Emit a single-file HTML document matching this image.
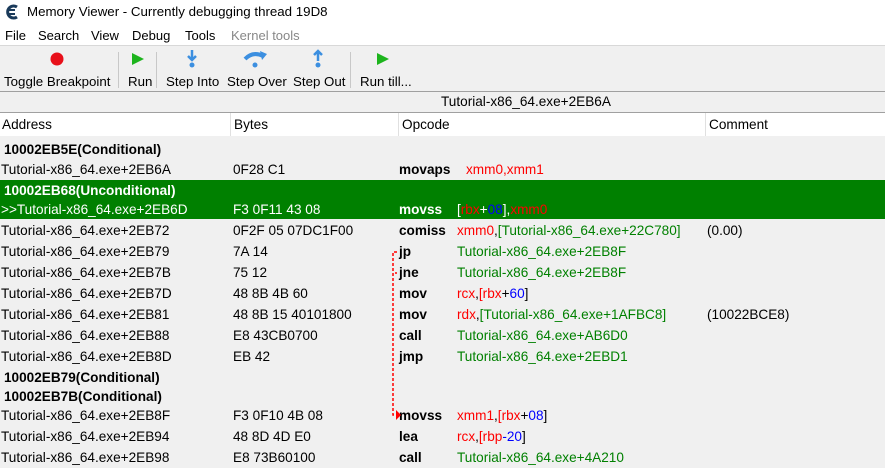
<!DOCTYPE html>
<html><head><meta charset="utf-8"><style>
*{margin:0;padding:0;box-sizing:border-box}
body{width:885px;height:462px;overflow:hidden;background:#f0f0f0;font-family:"Liberation Sans","Noto Sans CJK SC",sans-serif;font-size:13px;color:#000;position:relative}
.a{position:absolute;white-space:nowrap}
.title{top:0;left:0;width:885px;height:24px;background:#fff}
.menu{top:24px;left:0;width:885px;height:22px;background:#fff;border-bottom:1px solid #d8d8d8}
.row{position:absolute;left:0;width:885px;height:21px;line-height:21px;font-size:13.6px}
.b{font-weight:bold}
.r{color:#f00}.g{color:#008000}.bl{color:#00f}
.sep{position:absolute;top:52px;width:1px;height:36px;background:#c8c8c8}
</style></head><body>
<div class="a title"></div>
<svg class="a" style="left:4px;top:4px" width="16" height="16" viewBox="0 0 16 16"><path d="M13 3A6 6 0 1 0 13 13" fill="none" stroke="#1a3a5a" stroke-width="3"/><path d="M4 6h7M4 10h7" stroke="#1a3a5a" stroke-width="2"/></svg>
<div class="a" style="left:27px;top:4px;font-size:13.3px">Memory Viewer - Currently debugging thread 19D8</div>
<div class="a menu"></div>
<div class="a" style="left:5px;top:28px;font-size:13px">File</div>
<div class="a" style="left:38px;top:28px">Search</div>
<div class="a" style="left:91px;top:28px">View</div>
<div class="a" style="left:132px;top:28px">Debug</div>
<div class="a" style="left:185px;top:28px">Tools</div>
<div class="a" style="left:231px;top:28px;color:#888">Kernel tools</div>
<!-- toolbar -->
<svg class="a" style="left:50px;top:52px" width="14" height="14"><circle cx="7" cy="7" r="6.5" fill="#e8101a"/></svg>
<div class="a" style="left:4px;top:74px;font-size:13.3px">Toggle Breakpoint</div>
<div class="sep" style="left:118px"></div>
<svg class="a" style="left:131px;top:52px" width="14" height="14"><path d="M1 1L13 7L1 13Z" fill="#1db41d"/></svg>
<div class="a" style="left:128px;top:74px;font-size:13.3px">Run</div>
<div class="sep" style="left:156px"></div>
<svg class="a" style="left:185px;top:49px" width="14" height="20"><path d="M7 1V10M3 7L7 11L11 7" fill="none" stroke="#3c8fe0" stroke-width="2.5"/><circle cx="7" cy="16" r="2.5" fill="#3c8fe0"/></svg>
<div class="a" style="left:166px;top:74px;font-size:13.3px">Step Into</div>
<svg class="a" style="left:242px;top:49px" width="28" height="20"><path d="M3 10Q11 2 21 7" fill="none" stroke="#3c8fe0" stroke-width="4"/><path d="M18 2L25 5L20 11Z" fill="#3c8fe0"/><circle cx="13" cy="16" r="2.5" fill="#3c8fe0"/></svg>
<div class="a" style="left:227px;top:74px;font-size:13.3px">Step Over</div>
<svg class="a" style="left:311px;top:49px" width="14" height="20"><path d="M7 3V12M3 6L7 2L11 6" fill="none" stroke="#3c8fe0" stroke-width="2.5"/><circle cx="7" cy="16" r="2.5" fill="#3c8fe0"/></svg>
<div class="a" style="left:293px;top:74px;font-size:13.3px">Step Out</div>
<div class="sep" style="left:350px"></div>
<svg class="a" style="left:376px;top:52px" width="14" height="14"><path d="M1 1L13 7L1 13Z" fill="#1db41d"/></svg>
<div class="a" style="left:360px;top:74px;font-size:13.3px">Run till...</div>
<!-- address bar -->
<div class="a" style="left:0;top:91px;width:885px;height:22px;border-top:1px solid #a0a0a0;border-bottom:1px solid #a0a0a0;background:#f0f0f0"></div>
<div class="a" style="left:441px;top:94px;font-size:13.6px">Tutorial-x86_64.exe+2EB6A</div>
<!-- header -->
<div class="a" style="left:0;top:113px;width:885px;height:23px;background:#fff"></div>
<div class="a" style="left:230px;top:113px;width:1px;height:23px;background:#e0e0e0"></div>
<div class="a" style="left:398px;top:113px;width:1px;height:23px;background:#e0e0e0"></div>
<div class="a" style="left:705px;top:113px;width:1px;height:23px;background:#e0e0e0"></div>
<div class="a" style="left:2px;top:117px;font-size:13.6px">Address</div>
<div class="a" style="left:234px;top:117px;font-size:13.6px">Bytes</div>
<div class="a" style="left:402px;top:117px;font-size:13.6px">Opcode</div>
<div class="a" style="left:709px;top:117px;font-size:13.6px">Comment</div>
<div class="a" style="left:0;top:180px;width:885px;height:39px;background:#008000"></div>

<div class="row b" style="top:139px"><span class="a" style="left:4px">10002EB5E(Conditional)</span></div>
<div class="row" style="top:159px"><span class="a" style="left:1px">Tutorial-x86_64.exe+2EB6A</span><span class="a" style="left:233px">0F28 C1</span><span class="a b" style="left:399px">movaps</span><span class="a r" style="left:466px">xmm0,xmm1</span></div>
<div class="row b" style="top:180px;color:#fff"><span class="a" style="left:4px">10002EB68(Unconditional)</span></div>
<div class="row" style="top:199px;color:#fff"><span class="a" style="left:1px">&gt;&gt;Tutorial-x86_64.exe+2EB6D</span><span class="a" style="left:233px">F3 0F11 43 08</span><span class="a b" style="left:399px">movss</span><span class="a" style="left:457px">[<span class="r">rbx</span>+<span class="bl">08</span>],<span class="r">xmm0</span></span></div>
<div class="row" style="top:220px"><span class="a" style="left:1px">Tutorial-x86_64.exe+2EB72</span><span class="a" style="left:233px">0F2F 05 07DC1F00</span><span class="a b" style="left:399px">comiss</span><span class="a" style="left:457px"><span class="r">xmm0</span>,<span class="g">[Tutorial-x86_64.exe+22C780]</span></span><span class="a" style="left:707px">(0.00)</span></div>
<div class="row" style="top:241px"><span class="a" style="left:1px">Tutorial-x86_64.exe+2EB79</span><span class="a" style="left:233px">7A 14</span><span class="a b" style="left:399px">jp</span><span class="a g" style="left:457px">Tutorial-x86_64.exe+2EB8F</span></div>
<div class="row" style="top:262px"><span class="a" style="left:1px">Tutorial-x86_64.exe+2EB7B</span><span class="a" style="left:233px">75 12</span><span class="a b" style="left:399px">jne</span><span class="a g" style="left:457px">Tutorial-x86_64.exe+2EB8F</span></div>
<div class="row" style="top:283px"><span class="a" style="left:1px">Tutorial-x86_64.exe+2EB7D</span><span class="a" style="left:233px">48 8B 4B 60</span><span class="a b" style="left:399px">mov</span><span class="a" style="left:457px"><span class="r">rcx</span>,<span class="r">[rbx</span>+<span class="bl">60</span>]</span></div>
<div class="row" style="top:304px"><span class="a" style="left:1px">Tutorial-x86_64.exe+2EB81</span><span class="a" style="left:233px">48 8B 15 40101800</span><span class="a b" style="left:399px">mov</span><span class="a" style="left:457px"><span class="r">rdx</span>,<span class="g">[Tutorial-x86_64.exe+1AFBC8]</span></span><span class="a" style="left:707px">(10022BCE8)</span></div>
<div class="row" style="top:325px"><span class="a" style="left:1px">Tutorial-x86_64.exe+2EB88</span><span class="a" style="left:233px">E8 43CB0700</span><span class="a b" style="left:399px">call</span><span class="a g" style="left:457px">Tutorial-x86_64.exe+AB6D0</span></div>
<div class="row" style="top:346px"><span class="a" style="left:1px">Tutorial-x86_64.exe+2EB8D</span><span class="a" style="left:233px">EB 42</span><span class="a b" style="left:399px">jmp</span><span class="a g" style="left:457px">Tutorial-x86_64.exe+2EBD1</span></div>
<div class="row b" style="top:367px"><span class="a" style="left:4px">10002EB79(Conditional)</span></div>
<div class="row b" style="top:386px"><span class="a" style="left:4px">10002EB7B(Conditional)</span></div>
<div class="row" style="top:405px"><span class="a" style="left:1px">Tutorial-x86_64.exe+2EB8F</span><span class="a" style="left:233px">F3 0F10 4B 08</span><span class="a b" style="left:399px">movss</span><span class="a" style="left:457px"><span class="r">xmm1</span>,<span class="r">[rbx</span>+<span class="bl">08</span>]</span></div>
<div class="row" style="top:426px"><span class="a" style="left:1px">Tutorial-x86_64.exe+2EB94</span><span class="a" style="left:233px">48 8D 4D E0</span><span class="a b" style="left:399px">lea</span><span class="a" style="left:457px"><span class="r">rcx</span>,<span class="r">[rbp</span><span class="bl">-20</span>]</span></div>
<div class="row" style="top:447px"><span class="a" style="left:1px">Tutorial-x86_64.exe+2EB98</span><span class="a" style="left:233px">E8 73B60100</span><span class="a b" style="left:399px">call</span><span class="a g" style="left:457px">Tutorial-x86_64.exe+4A210</span></div>
<svg class="a" style="left:388px;top:248px" width="14" height="172"><path d="M9 4H5V167H10" fill="none" stroke="#f00" stroke-width="1.5" stroke-dasharray="3,2"/><path d="M9 25H5" stroke="#f00" stroke-width="1.5" stroke-dasharray="2,2"/><path d="M8 162L13 167L8 172Z" fill="#f00"/></svg>
</body></html>
